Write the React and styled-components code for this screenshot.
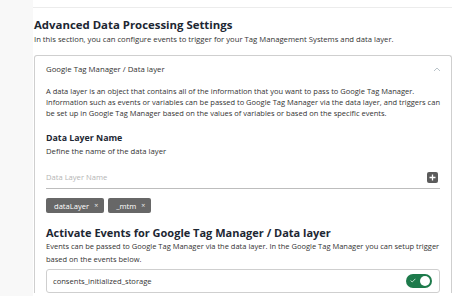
import React from 'react';
import styled, { createGlobalStyle } from 'styled-components';

const Global = createGlobalStyle`
  html, body {
    margin: 0;
    background: #f8f8f8;
    font-family: "Open Sans", "Liberation Sans", sans-serif;
    color: #2b2b2b;
  }
`;

const Page = styled.div`
  display: flex;
  height: 296px;
  overflow: hidden;
`;

const Sidebar = styled.div`
  width: 33px;
  flex-shrink: 0;
  background: #f8f8f8;
`;

const Main = styled.div`
  flex: 1;
  background: #fff;
  padding-right: 22px;
`;

const PrevCard = styled.div`
  height: 7px;
  border-bottom: 1px solid #ececec;
`;

const Section = styled.div`
  padding: 9px 0 0 1px;
`;

const Heading = styled.h2`
  margin: 0;
  font-size: 11.4px;
  font-weight: 700;
  color: #1d2733;
  line-height: 16px;
`;

const Sub = styled.p`
  margin: 0;
  font-size: ${p => p.size || 7.7}px;
  line-height: ${p => p.lh || 13}px;
  color: #333;
  white-space: nowrap;
`;

const Accordion = styled.div`
  margin-top: 10px;
  border: 1px solid #cfcfcf;
  border-bottom: none;
  border-radius: 3px 3px 0 0;
`;

const AccHead = styled.div`
  display: flex;
  justify-content: space-between;
  align-items: center;
  height: 26px;
  padding: 0 10px 0 11px;
  font-size: 7.8px;
  color: #333;
`;

const AccBody = styled.div`
  padding: 4px 11px 0 11px;
`;

const SubTitle = styled.h3`
  margin: ${p => p.top}px 0 0;
  font-size: ${p => p.size}px;
  font-weight: 700;
  color: #1d2733;
  line-height: 14px;
`;

const InputRow = styled.div`
  display: flex;
  align-items: center;
  justify-content: space-between;
  margin-top: 8px;
  width: 394px;
  height: 22px;
  border-bottom: 1px solid #bdbdbd;
  font-size: 7.6px;
  color: #b5b5b5;
`;

const PlusBtn = styled.div`
  width: 11px;
  height: 11px;
  border-radius: 2px;
  background: #5b5b5b;
  display: flex;
  align-items: center;
  justify-content: center;
  margin-right: 2px;
`;

const Chips = styled.div`
  display: flex;
  gap: 4px;
  margin-top: 9px;
`;

const Chip = styled.div`
  display: flex;
  align-items: center;
  gap: 5px;
  height: 15px;
  padding: 0 6px 0 8px;
  border-radius: 2px;
  background: #676767;
  color: #fff;
  font-size: 7.6px;
  span { font-size: 7px; opacity: 0.85; }
`;

const EventBox = styled.div`
  display: flex;
  align-items: center;
  justify-content: space-between;
  margin-top: 3px;
  width: 394px;
  height: 24px;
  box-sizing: border-box;
  border: 1px solid #cfcfcf;
  border-radius: 3px;
  padding: 0 7px 0 6px;
  font-size: 7.6px;
  color: #333;
`;

const Toggle = styled.div`
  position: relative;
  width: 26px;
  height: 14px;
  border-radius: 7px;
  background: #1d7a4b;
  &::after {
    content: '';
    position: absolute;
    right: 2px;
    top: 2px;
    width: 10px;
    height: 10px;
    border-radius: 50%;
    background: #fff;
  }
  svg { position: absolute; left: 4px; top: 4px; }
`;

export default function App() {
  return (
    <Page>
      <Global />
      <Sidebar />
      <Main>
        <PrevCard />
        <Section>
          <Heading>Advanced Data Processing Settings</Heading>
          <Sub lh={12}>In this section, you can configure events to trigger for your Tag Management Systems and data layer.</Sub>
          <Accordion>
            <AccHead>
              Google Tag Manager / Data layer
              <svg width="8" height="5" viewBox="0 0 8 5">
                <path d="M1 4 L4 1 L7 4" fill="none" stroke="#b9c3c9" strokeWidth="1" />
              </svg>
            </AccHead>
            <AccBody>
              <Sub lh={11} size={7.5}>
                A data layer is an object that contains all of the information that you want to pass to Google Tag Manager.<br />
                Information such as events or variables can be passed to Google Tag Manager via the data layer, and triggers can<br />
                be set up in Google Tag Manager based on the values of variables or based on the specific events.
              </Sub>
              <SubTitle top={12} size={8.8}>Data Layer Name</SubTitle>
              <Sub>Define the name of the data layer</Sub>
              <InputRow>
                Data Layer Name
                <PlusBtn>
                  <svg width="7" height="7" viewBox="0 0 7 7">
                    <path d="M3.5 0.5 V6.5 M0.5 3.5 H6.5" stroke="#fff" strokeWidth="1.3" />
                  </svg>
                </PlusBtn>
              </InputRow>
              <Chips>
                <Chip>dataLayer <span>×</span></Chip>
                <Chip>_mtm <span>×</span></Chip>
              </Chips>
              <SubTitle top={13} size={11}>Activate Events for Google Tag Manager / Data layer</SubTitle>
              <Sub size={7.5}>
                Events can be passed to Google Tag Manager via the data layer. In the Google Tag Manager you can setup trigger<br />
                based on the events below.
              </Sub>
              <EventBox>
                consents_initialized_storage
                <Toggle>
                  <svg width="6" height="5" viewBox="0 0 6 5">
                    <path d="M0.6 2.6 L2.2 4 L5.4 0.8" fill="none" stroke="#cfe9d9" strokeWidth="0.9" />
                  </svg>
                </Toggle>
              </EventBox>
            </AccBody>
          </Accordion>
        </Section>
      </Main>
    </Page>
  );
}
